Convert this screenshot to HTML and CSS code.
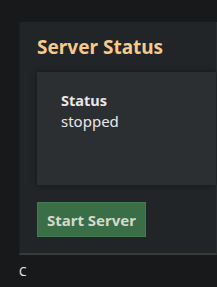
FILE: index.html
```html
<!DOCTYPE html>
<html lang="en">
<head>
    <meta charset="UTF-8">
    <meta name="viewport" content="width=device-width, initial-scale=1.0">
    <title>Server Status</title>
    <link rel="stylesheet" href="styles.css">
</head>
<body>
    <div class="card">
        <h2 class="card-title">Server Status</h2>
        <div class="status-box">
            <div class="status-label">Status</div>
            <div class="status-value">stopped</div>
        </div>
        <button class="start-btn">Start Server</button>
    </div>
    <div class="footer">C</div>
</body>
</html>
```

FILE: styles.css
```css
* {
    margin: 0;
    padding: 0;
    box-sizing: border-box;
    font-family: "Noto Sans", "Open Sans", sans-serif;
}

body {
    background-color: #18191b;
    padding: 22px 0 0 19px;
    height: 100vh;
    overflow: hidden;
}

.card {
    background-color: #222527;
    border-bottom: 2px solid #3a3b39;
    border-left: 1px solid #1c1e20;
    border-right: 1px solid #2a2d2f;
    padding: 13px 0 16px 17px;
}

.card-title {
    color: #f7c98b;
    font-size: 19px;
    font-weight: bold;
    line-height: 24px;
    margin-bottom: 13px;
}

.status-box {
    background-color: #2c2f32;
    box-shadow: 0 0 6px rgba(0,0,0,0.45);
    padding: 18px 24px;
    height: 113px;
    margin-bottom: 17px;
}

.status-label {
    color: #e8e8e8;
    font-size: 14.5px;
    font-weight: bold;
    line-height: 20px;
}

.status-value {
    color: #e8e8e8;
    font-size: 15px;
    line-height: 22px;
}

.start-btn {
    background-color: #3a6e47;
    color: #d6d8cc;
    border: 1px solid #447a50;
    font-size: 15px;
    font-weight: bold;
    width: 109px;
    height: 35px;
    cursor: pointer;
}

.footer {
    color: #e8e8e8;
    font-size: 12px;
    margin-top: 8px;
}
```
